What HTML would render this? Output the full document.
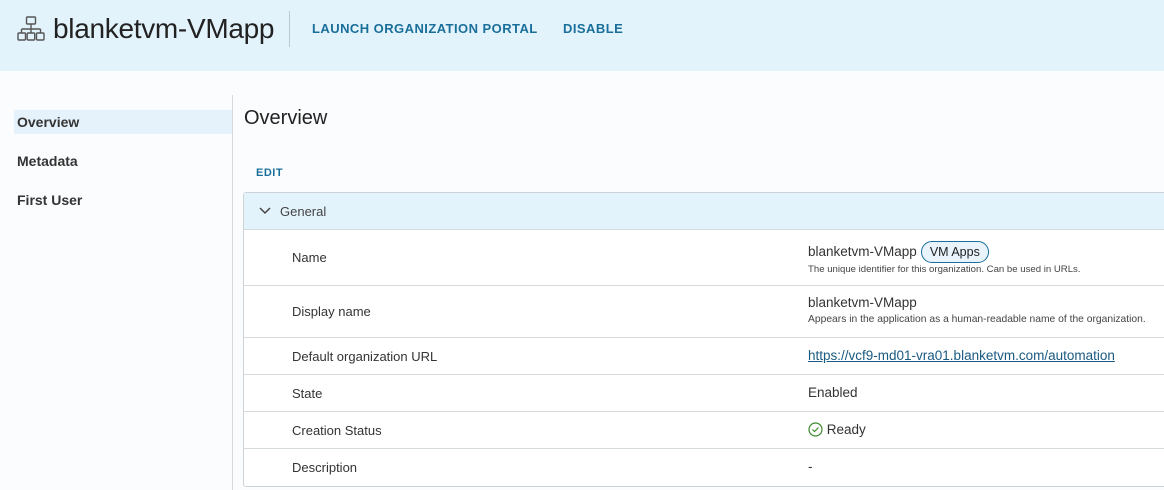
<!DOCTYPE html><html><head><style>
body{margin:0;width:1164px;height:490px;overflow:hidden;background:#fafcfd;font-family:"Liberation Sans",sans-serif;color:#333;position:relative}
.hdr{position:absolute;left:0;top:0;width:1164px;height:71px;background:#e3f3fc}
.title{position:absolute;left:53px;top:13px;font-size:28px;color:#222;letter-spacing:-0.3px}
.sep{position:absolute;left:289px;top:11px;width:1px;height:36px;background:#bcc8d0}
.lnk{position:absolute;top:21px;font-size:13px;font-weight:bold;color:#1a6f9a;letter-spacing:0.45px}
.side{position:absolute;left:232px;top:95px;width:1px;height:395px;background:#d5dadd}
.nav{position:absolute;left:17px;font-size:14px;font-weight:bold;color:#333}
.act{position:absolute;left:14px;top:110px;width:218px;height:24px;background:#e6f2fb}
.tbl{position:absolute;left:243px;top:192px;width:930px;height:293px;border:1px solid #ccd3d8;background:#fff;border-radius:3px}
.row{position:absolute;left:0;width:100%;border-top:1px solid #d5dadd;font-size:13px}
.lab{position:absolute;left:48px}
.val{position:absolute;left:564px}
.v{font-size:13.5px}
.small{font-size:10.3px;color:#444}
</style></head><body>
<div class="hdr"></div>
<svg style="position:absolute;left:17px;top:16px" width="28" height="27" viewBox="0 0 28 27" fill="none" stroke="#555" stroke-width="1.4"><rect x="9.5" y="1" width="9" height="7" rx="1"/><path d="M14 8v5M4.5 13h19M4.5 13v4M23.5 13v4M14 13v4"/><rect x="1" y="17" width="7.5" height="7" rx="1"/><rect x="19.5" y="17" width="7.5" height="7" rx="1"/><rect x="10.2" y="17" width="7.5" height="7" rx="1"/></svg>
<div class="title">blanketvm-VMapp</div>
<div class="sep"></div>
<div class="lnk" style="left:312px">LAUNCH ORGANIZATION PORTAL</div>
<div class="lnk" style="left:563px">DISABLE</div>
<div class="act"></div>
<div class="nav" style="top:114px">Overview</div>
<div class="nav" style="top:153px">Metadata</div>
<div class="nav" style="top:192px">First User</div>
<div class="side"></div>
<div style="position:absolute;left:244px;top:107px;font-size:20px;color:#222">Overview</div>
<div style="position:absolute;left:256px;top:167px;font-size:11px;font-weight:bold;color:#1a6f9a;letter-spacing:0.5px">EDIT</div>
<div class="tbl">
<div class="row" style="top:0;height:36px;border-top:none;background:#e3f3fc"><svg style="position:absolute;left:15px;top:13px" width="12" height="10"><path d="M1 2l5 5 5-5" stroke="#444" stroke-width="1.5" fill="none"/></svg><span style="position:absolute;left:36px;top:11px;color:#444">General</span></div>
<div class="row" style="top:36px;height:56px"><span class="lab" style="top:20px">Name</span><span class="val v" style="top:11px">blanketvm-VMapp<span style="display:inline-block;border:1px solid #1a6f9a;border-radius:12px;background:#e8f3fb;padding:3px 8px;font-size:12.5px;color:#222;margin-left:4px">VM Apps</span></span><span class="val small" style="top:34px;font-size:9.6px">The unique identifier for this organization. Can be used in URLs.</span></div>
<div class="row" style="top:92px;height:52px"><span class="lab" style="top:18px">Display name</span><span class="val v" style="top:9px">blanketvm-VMapp</span><span class="val small" style="top:28px">Appears in the application as a human-readable name of the organization.</span></div>
<div class="row" style="top:144px;height:37px"><span class="lab" style="top:11px">Default organization URL</span><span class="val v" style="top:10px;color:#1a5a82;text-decoration:underline">https://vcf9-md01-vra01.blanketvm.com/automation</span></div>
<div class="row" style="top:181px;height:37px"><span class="lab" style="top:11px">State</span><span class="val v" style="top:10px">Enabled</span></div>
<div class="row" style="top:218px;height:37px"><span class="lab" style="top:11px">Creation Status</span><span class="val v" style="top:10px"><svg width="15" height="15" style="vertical-align:-3px" viewBox="0 0 15 15"><circle cx="7.5" cy="7.5" r="6.5" fill="none" stroke="#3c8a2e" stroke-width="1.2"/><path d="M4.5 7.5l2 2 4-4" fill="none" stroke="#3c8a2e" stroke-width="1.2"/></svg> Ready</span></div>
<div class="row" style="top:255px;height:37px"><span class="lab" style="top:11px">Description</span><span class="val v" style="top:10px">-</span></div>
</div>
</body></html>
